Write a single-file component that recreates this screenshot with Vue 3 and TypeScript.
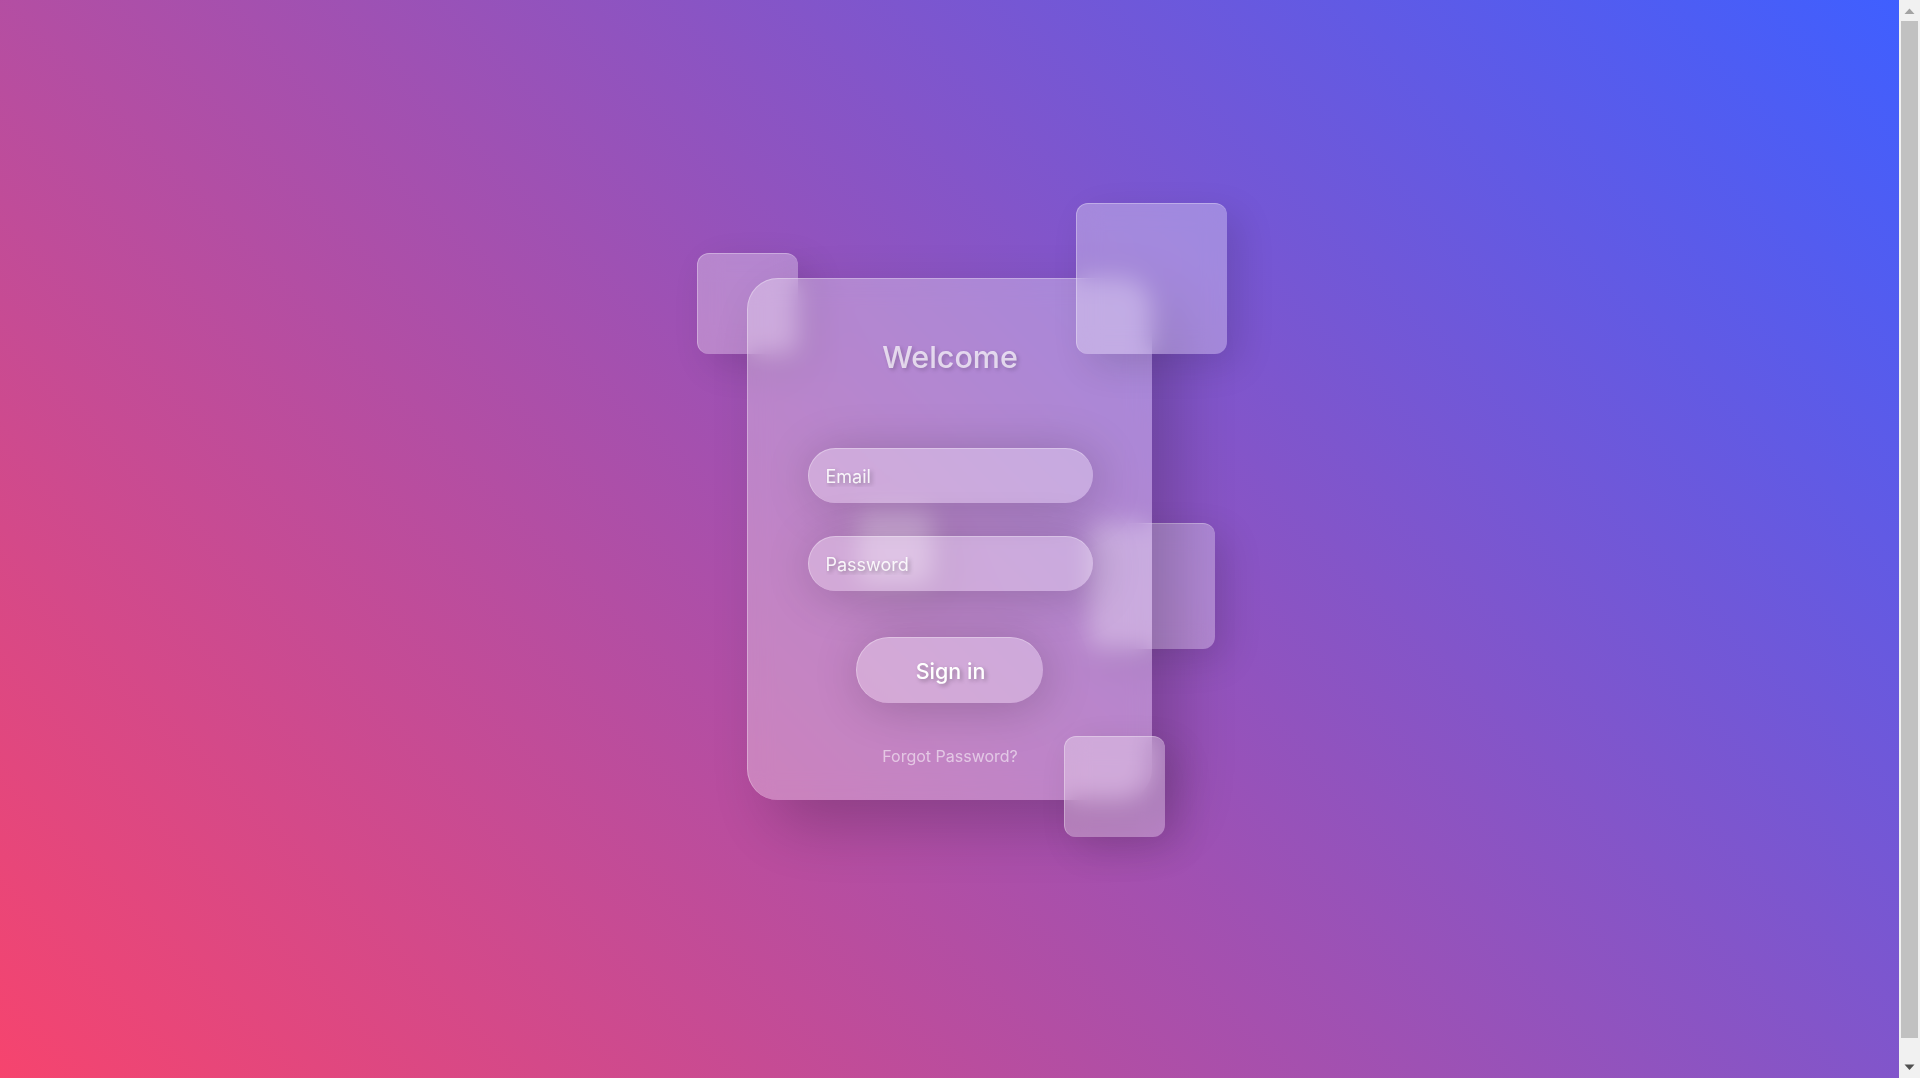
<script setup lang="ts">
interface Square {
  id: string
}
const behind: Square[] = [{ id: 'sq-left' }, { id: 'sq-mid' }, { id: 'sq-hidden' }]
const front: Square[] = [{ id: 'sq-top' }, { id: 'sq-bottom' }]
</script>

<template>
  <div class="page">
    <main class="main">
      <div class="stage">
        <div v-for="s in behind" :key="s.id" class="square" :class="s.id"></div>
        <form class="card" @submit.prevent>
          <h1 class="title">Welcome</h1>
          <input class="field first" type="text" placeholder="Email" />
          <input class="field second" type="password" placeholder="Password" />
          <button class="submit" type="submit">Sign in</button>
          <a class="forgot" href="#">Forgot Password?</a>
        </form>
        <div v-for="s in front" :key="s.id" class="square" :class="s.id"></div>
      </div>
    </main>
    <aside class="scrollbar" aria-hidden="true">
      <svg class="arrow" width="21" height="21" viewBox="0 0 21 21"><path d="M10.5 8.5 L15.5 14 H5.5 Z" fill="#a3a3a3" /></svg>
      <div class="track"><div class="thumb"></div></div>
      <svg class="arrow" width="21" height="21" viewBox="0 0 21 21"><path d="M5.5 7.5 H15.5 L10.5 13 Z" fill="#505050" /></svg>
    </aside>
  </div>
</template>

<style>
html, body { margin: 0; background: #fff; overflow: hidden; }
</style>

<style scoped>
.page {
  display: flex;
  height: 1078px;
  font-family: Inter, "Open Sans", "Liberation Sans", sans-serif;
}
.main {
  flex: 1;
  display: flex;
  align-items: center;
  justify-content: center;
  background: linear-gradient(45deg, #f6446e, #3f5fff);
}
.stage {
  position: relative;
  width: 405px;
  height: 522px;
}
.card {
  position: relative;
  box-sizing: border-box;
  width: 405px;
  height: 522px;
  display: flex;
  flex-direction: column;
  align-items: center;
  padding-top: 59px;
  border-radius: 31px;
  border-top: 1px solid rgba(255, 255, 255, 0.3);
  border-left: 1px solid rgba(255, 255, 255, 0.3);
  background: rgba(255, 255, 255, 0.3);
  backdrop-filter: blur(12px);
  box-shadow: 25px 25px 60px rgba(0, 0, 0, 0.2);
}
.title {
  margin: 0;
  font-size: 30.5px;
  line-height: 37px;
  font-weight: 500;
  color: rgba(255, 255, 255, 0.7);
  text-shadow: 2px 2px 4px rgba(0, 0, 0, 0.2);
}
.field {
  box-sizing: border-box;
  width: 285px;
  height: 55px;
  padding: 0 17px;
  border: none;
  border-top: 1px solid rgba(255, 255, 255, 0.3);
  border-left: 1px solid rgba(255, 255, 255, 0.3);
  border-radius: 28px;
  background: rgba(255, 255, 255, 0.3);
  box-shadow: 4px 4px 50px rgba(0, 0, 0, 0.2);
  font-family: inherit;
  font-size: 18px;
  font-weight: 400;
  color: #fff;
  outline: none;
}
.field::placeholder {
  color: rgba(255, 255, 255, 0.9);
  text-shadow: 2px 2px 4px rgba(0, 0, 0, 0.3);
}
.first { margin-top: 73px; }
.second { margin-top: 33px; }
.submit {
  box-sizing: border-box;
  width: 187px;
  height: 66px;
  margin-top: 46px;
  margin-right: 2px;
  border: none;
  border-top: 1px solid rgba(255, 255, 255, 0.3);
  border-left: 1px solid rgba(255, 255, 255, 0.3);
  border-radius: 33px;
  background: rgba(255, 255, 255, 0.3);
  box-shadow: 4px 4px 50px rgba(0, 0, 0, 0.2);
  font-family: inherit;
  font-size: 21.5px;
  font-weight: 500;
  padding: 0 0 0 2px;
  color: #fff;
  text-shadow: 2px 2px 4px rgba(0, 0, 0, 0.3);
}
.forgot {
  margin-top: 42px;
  font-size: 16px;
  line-height: 22px;
  color: rgba(255, 255, 255, 0.55);
  text-decoration: none;
}
.square {
  position: absolute;
  box-sizing: border-box;
  border-radius: 12px;
  border-top: 1px solid rgba(255, 255, 255, 0.3);
  border-left: 1px solid rgba(255, 255, 255, 0.3);
  background: rgba(255, 255, 255, 0.3);
  backdrop-filter: blur(12px);
  box-shadow: 12px 12px 37px rgba(0, 0, 0, 0.12);
}
.sq-left { left: -50px; top: -25px; width: 101px; height: 101px; }
.sq-mid { left: 342px; top: 245px; width: 126px; height: 126px; }
.sq-hidden { left: 111px; top: 232px; width: 75px; height: 75px; }
.sq-top { left: 329px; top: -75px; width: 151px; height: 151px; }
.sq-bottom { left: 317px; top: 458px; width: 101px; height: 101px; }
.scrollbar {
  width: 21px;
  display: flex;
  flex-direction: column;
  background: #f1f1f1;
}
.arrow { display: block; flex: none; }
.track { flex: 1; padding: 0 2px; }
.thumb { height: 1017px; background: #c1c1c1; }
</style>
